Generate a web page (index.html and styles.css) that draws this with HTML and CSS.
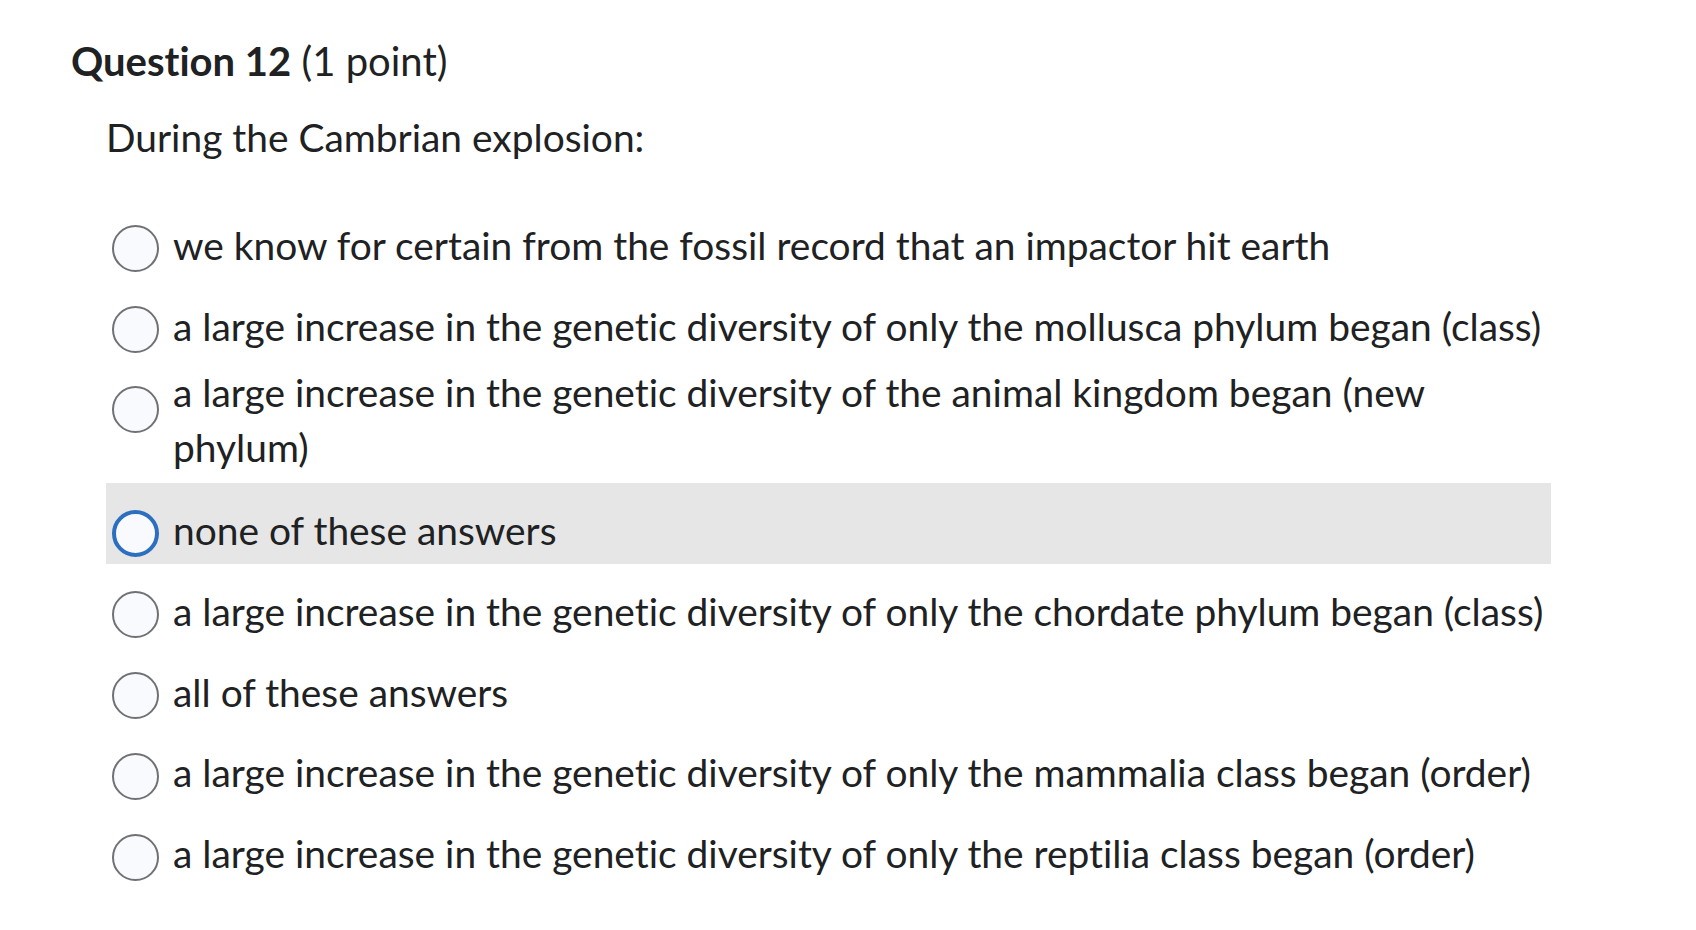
FILE: index.html
```html
<!DOCTYPE html>
<html lang="en">
<head>
<meta charset="utf-8">
<title>Question 12</title>
<link rel="stylesheet" href="styles.css">
</head>
<body>
<main class="quiz">
  <h2 class="q-title"><strong class="q-num">Question 12</strong> <span class="q-pts">(1 point)</span></h2>
  <div class="q-body">
    <p class="q-text">During the Cambrian explosion:</p>
    <div class="options">
      <label class="option"><span class="radio"></span><span class="opt-text">we know for certain from the fossil record that an impactor hit earth</span></label>
      <label class="option"><span class="radio"></span><span class="opt-text">a large increase in the genetic diversity of only the mollusca phylum began (class)</span></label>
      <label class="option option--multi"><span class="radio"></span><span class="opt-text">a large increase in the genetic diversity of the animal kingdom began (new phylum)</span></label>
      <label class="option option--hover"><span class="radio radio--focus"></span><span class="opt-text">none of these answers</span></label>
      <label class="option"><span class="radio"></span><span class="opt-text">a large increase in the genetic diversity of only the chordate phylum began (class)</span></label>
      <label class="option"><span class="radio"></span><span class="opt-text">all of these answers</span></label>
      <label class="option"><span class="radio"></span><span class="opt-text">a large increase in the genetic diversity of only the mammalia class began (order)</span></label>
      <label class="option"><span class="radio"></span><span class="opt-text">a large increase in the genetic diversity of only the reptilia class began (order)</span></label>
    </div>
  </div>
</main>
</body>
</html>
```

FILE: styles.css
```css
html, body {
  margin: 0;
  padding: 0;
  background: #ffffff;
}

body {
  font-family: Lato, "Noto Sans", sans-serif;
  color: #202122;
  font-size: 38.9px;
  line-height: 54px;
  font-variant-ligatures: no-common-ligatures;
}

.quiz {
  padding: 34px 0 0 71px;
}

.q-title {
  margin: 0;
  font-size: 40px;
  line-height: 54px;
  font-weight: 400;
}

.q-num {
  font-weight: 700;
}

.q-body {
  margin-left: 35px;
}

.q-text {
  margin: 22px 0 0 0;
}

.options {
  width: 1445px;
  margin-top: 34px;
  display: flex;
  flex-direction: column;
}

.option {
  display: flex;
  align-items: flex-start;
  padding: 20px 0 6.5px 0;
}

.option--multi {
  padding: 5.7px 0 7.8px 0;
  line-height: 55px;
}

.option--hover {
  background: #e6e6e6;
}

.radio {
  flex: none;
  box-sizing: border-box;
  width: 47px;
  height: 47px;
  margin: 7.3px 14px 0 6px;
  border: 2px solid #6f7174;
  border-radius: 50%;
  background: #f9fafe;
}

.option--multi .radio {
  margin-top: 20.3px;
}

.radio--focus {
  border: 4px solid #2d6fbf;
}

.opt-text {
  flex: 1;
  margin-right: -8px;
}
```
